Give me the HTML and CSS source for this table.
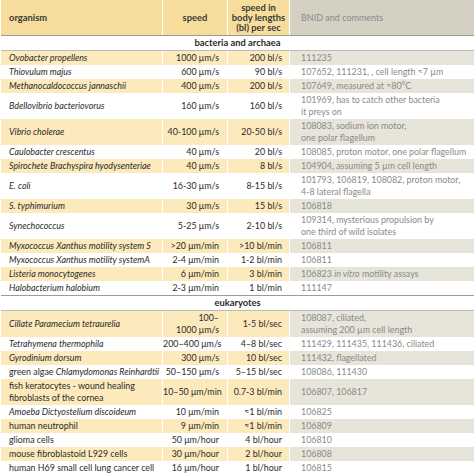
FILE: index.html
```html
<!DOCTYPE html>
<html lang="en">
<head>
    <meta charset="UTF-8">
    <meta name="viewport" content="width=device-width, initial-scale=1.0">
    <title>Swimming speeds</title>
    <link rel="stylesheet" href="styles.css">
</head>
<body>
    <table class="speeds">
        <colgroup>
            <col class="col-org">
            <col class="col-speed">
            <col class="col-bl">
            <col class="col-note">
        </colgroup>
        <thead>
            <tr>
                <th class="org">organism</th>
                <th class="num">speed</th>
                <th class="num">speed in<br>body lengths<br>(bl) per sec</th>
                <th class="note">BNID and comments</th>
            </tr>
        </thead>
        <tbody>
            <tr class="section"><td colspan="4">bacteria and archaea</td></tr>
            <tr class="alt">
                <td class="org"><i>Ovobacter propellens</i></td>
                <td class="num">1000 μm/s</td>
                <td class="num bl">200 bl/s</td>
                <td class="note">111235</td>
            </tr>
            <tr>
                <td class="org"><i>Thiovulum majus</i></td>
                <td class="num">600 μm/s</td>
                <td class="num bl">90 bl/s</td>
                <td class="note">107652, 111231, , cell length ≈7 µm</td>
            </tr>
            <tr class="alt">
                <td class="org"><i>Methanocaldococcus jannaschii</i></td>
                <td class="num">400 μm/s</td>
                <td class="num bl">200 bl/s</td>
                <td class="note">107649, measured at ≈80°C</td>
            </tr>
            <tr>
                <td class="org"><i>Bdellovibrio bacteriovorus</i></td>
                <td class="num">160 μm/s</td>
                <td class="num bl">160 bl/s</td>
                <td class="note">101969, has to catch other bacteria<br>it preys on</td>
            </tr>
            <tr class="alt">
                <td class="org"><i>Vibrio cholerae</i></td>
                <td class="num">40-100 μm/s</td>
                <td class="num bl">20-50 bl/s</td>
                <td class="note">108083, sodium ion motor,<br>one polar flagellum</td>
            </tr>
            <tr>
                <td class="org"><i>Caulobacter crescentus</i></td>
                <td class="num">40 μm/s</td>
                <td class="num bl">20 bl/s</td>
                <td class="note">108085, proton motor, one polar flagellum</td>
            </tr>
            <tr class="alt">
                <td class="org"><i>Spirochete Brachyspira hyodysenteriae</i></td>
                <td class="num">40 μm/s</td>
                <td class="num bl">8 bl/s</td>
                <td class="note">104904, assuming 5 µm cell length</td>
            </tr>
            <tr>
                <td class="org"><i>E. coli</i></td>
                <td class="num">16-30 μm/s</td>
                <td class="num bl">8-15 bl/s</td>
                <td class="note">101793, 106819, 108082, proton motor,<br>4-8 lateral flagella</td>
            </tr>
            <tr class="alt">
                <td class="org"><i>S. typhimurium</i></td>
                <td class="num">30 μm/s</td>
                <td class="num bl">15 bl/s</td>
                <td class="note">106818</td>
            </tr>
            <tr>
                <td class="org"><i>Synechococcus</i></td>
                <td class="num">5-25 μm/s</td>
                <td class="num bl">2-10 bl/s</td>
                <td class="note">109314, mysterious propulsion by<br>one third of wild isolates</td>
            </tr>
            <tr class="alt">
                <td class="org"><i>Myxococcus Xanthus motility system S</i></td>
                <td class="num">&gt;20 μm/min</td>
                <td class="num bl">&gt;10 bl/min</td>
                <td class="note">106811</td>
            </tr>
            <tr>
                <td class="org"><i>Myxococcus Xanthus motility systemA</i></td>
                <td class="num">2-4 μm/min</td>
                <td class="num bl">1-2 bl/min</td>
                <td class="note">106811</td>
            </tr>
            <tr class="alt">
                <td class="org"><i>Listeria monocytogenes</i></td>
                <td class="num">6 μm/min</td>
                <td class="num bl">3 bl/min</td>
                <td class="note">106823 <i>in vitro</i> motility assays</td>
            </tr>
            <tr>
                <td class="org"><i>Halobacterium halobium</i></td>
                <td class="num">2-3 μm/min</td>
                <td class="num bl">1 bl/min</td>
                <td class="note">111147</td>
            </tr>
        </tbody>
        <tbody>
            <tr class="section"><td colspan="4">eukaryotes</td></tr>
            <tr class="alt">
                <td class="org"><i>Cillate Paramecium tetraurelia</i></td>
                <td class="num">100–<br>1000 μm/s</td>
                <td class="num bl">1-5 bl/sec</td>
                <td class="note">108087, ciliated,<br>assuming 200 µm cell length</td>
            </tr>
            <tr>
                <td class="org"><i>Tetrahymena thermophila</i></td>
                <td class="num">200–400 μm/s</td>
                <td class="num bl">4–8 bl/sec</td>
                <td class="note">111429, 111435, 111436, ciliated</td>
            </tr>
            <tr class="alt">
                <td class="org"><i>Gyrodinium dorsum</i></td>
                <td class="num">300 μm/s</td>
                <td class="num bl">10 bl/sec</td>
                <td class="note">111432, flagellated</td>
            </tr>
            <tr>
                <td class="org">green algae <i>Chlamydomonas Reinhardtii</i></td>
                <td class="num">50–150 μm/s</td>
                <td class="num bl">5–15 bl/sec</td>
                <td class="note">108086, 111430</td>
            </tr>
            <tr class="alt">
                <td class="org">fish keratocytes - wound healing<br>fibroblasts of the cornea</td>
                <td class="num">10–50 μm/min</td>
                <td class="num bl">0.7-3 bl/min</td>
                <td class="note">106807, 106817</td>
            </tr>
            <tr>
                <td class="org"><i>Amoeba Dictyostelium discoideum</i></td>
                <td class="num">10 μm/min</td>
                <td class="num bl">≈1 bl/min</td>
                <td class="note">106825</td>
            </tr>
            <tr class="alt">
                <td class="org">human neutrophil</td>
                <td class="num">9 μm/min</td>
                <td class="num bl">≈1 bl/min</td>
                <td class="note">106809</td>
            </tr>
            <tr>
                <td class="org">glioma cells</td>
                <td class="num">50 μm/hour</td>
                <td class="num bl">4 bl/hour</td>
                <td class="note">106810</td>
            </tr>
            <tr class="alt">
                <td class="org">mouse fibroblastoid L929 cells</td>
                <td class="num">30 μm/hour</td>
                <td class="num bl">2 bl/hour</td>
                <td class="note">106808</td>
            </tr>
            <tr>
                <td class="org">human H69 small cell lung cancer cell</td>
                <td class="num">16 μm/hour</td>
                <td class="num bl">1 bl/hour</td>
                <td class="note">106815</td>
            </tr>
        </tbody>
    </table>
</body>
</html>
```

FILE: styles.css
```css
body {
    margin: 0;
    background-color: #fff;
    font-family: Lato, "Liberation Sans", sans-serif;
    font-size: 8.9px;
    color: #2b2b2b;
    overflow: hidden;
}

.speeds {
    border-collapse: separate;
    border-spacing: 1px 0;
    table-layout: fixed;
    width: 475px;
}
.col-org { width: 161px; }
.col-speed { width: 64px; }
.col-bl { width: 61px; }
.col-note { width: 184px; }

.speeds th {
    height: 35px;
    padding: 0;
    line-height: 10px;
    font-size: 9.4px;
    font-weight: bold;
    color: #3a3a3a;
    background-color: #f7dd9c;
    text-align: center;
    vertical-align: middle;
}
.speeds th.org {
    text-align: left;
    padding-left: 8px;
}
.speeds th.note {
    text-align: left;
    padding-left: 11px;
    font-weight: normal;
    font-size: 9px;
    color: #8a8a8a;
    background-color: #d4d0c2;
}

.speeds td {
    padding: 1px 8px;
    line-height: 12px;
    white-space: nowrap;
    vertical-align: middle;
}
.speeds td.org {
    padding-right: 0;
}
.speeds td.num {
    text-align: right;
    padding-left: 0;
}
.speeds td.bl {
    padding-right: 7px;
}
.speeds td.note {
    padding-left: 11px;
    color: #8a8a8a;
    overflow: hidden;
}

.alt td {
    background-color: #fce9bc;
}
.alt td.note {
    background-color: #e7e4d9;
}

.section td {
    text-align: center;
    font-weight: bold;
    font-size: 9.4px;
    color: #2b2b2b;
    border-top: 1px solid #9e9b91;
    border-bottom: 1px solid #bcbcbc;
}
```
